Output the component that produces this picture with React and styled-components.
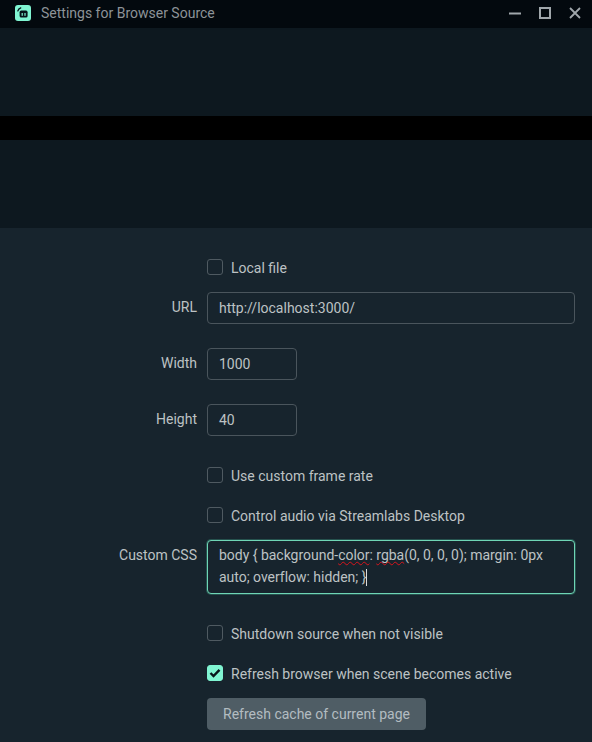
import React from 'react';
import styled, { createGlobalStyle } from 'styled-components';

const Global = createGlobalStyle`
  html, body { margin: 0; padding: 0; background: #17242d; }
  * { box-sizing: border-box; }
`;
const Page = styled.div`
  width: 592px; height: 742px; overflow: hidden;
  background: #17242d; font-family: Roboto, "Liberation Sans", sans-serif;
  font-size: 14px; color: #bdc2c4;
`;
const TitleBar = styled.div`
  height: 28px; background: #03090e; display: flex; align-items: center;
  padding: 0 0 2px 15px; color: #8d9398; font-size: 14px;
`;
const Logo = styled.svg`width: 16px; height: 16px; margin-right: 10px; flex: none;`;
const Title = styled.span`flex: 1; padding-bottom: 1px;`;
const WinBtn = styled.svg`width: 16px; height: 16px; margin-right: 14px; flex: none; &:last-child { margin-right: 9px; }`;
const Preview = styled.div`height: 200px; background: #0d181f; display: flex; flex-direction: column; justify-content: center;`;
const PreviewBand = styled.div`height: 24px; background: #000;`;
const Form = styled.div`padding: 31px 17px 0 0; display: flex; flex-direction: column;`;
const Row = styled.div`
  display: flex; align-items: flex-start; margin-top: ${p => p.$mt || 0}px;
`;
const Label = styled.label`
  width: 197px; text-align: right; margin-right: 10px; flex: none;
  line-height: 18px; padding-top: ${p => p.$pt ?? 6}px; color: #bdc2c4;
`;
const Input = styled.div`
  height: 32px; width: ${p => p.$w}; border: 1px solid #4a555c; border-radius: 4px;
  padding: 0 11px; line-height: 30px; color: #bdc2c4; background: #17242d;
`;
const TextArea = styled.div`
  width: 368px; height: 54px; border: 1px solid #6fd5b5; border-radius: 4px;
  box-shadow: 0 0 0 1px rgba(80, 200, 165, 0.28);
  background: #17242d; padding: 3px 11px; line-height: 22px; color: #bdc2c4; letter-spacing: -0.02px;
`;
const Squiggle = styled.span`text-decoration: underline wavy #d8141c 1px; text-underline-offset: 1px; text-decoration-skip-ink: none;`;
const Caret = styled.span`display: inline-block; width: 1px; height: 17px; background: #d8dcdd; vertical-align: -4px;`;
const CheckWrap = styled.div`display: flex; align-items: center; height: 16px; margin-left: 207px;`;
const CheckText = styled.span`padding-top: 2px; line-height: 16px;`;
const Box = styled.span`
  width: 16px; height: 16px; border-radius: 3px; flex: none; margin-right: 8px;
  border: 1px solid ${p => p.$on ? '#80f5d2' : '#4f5a61'};
  background: ${p => p.$on ? '#80f5d2' : 'transparent'};
  display: flex; align-items: center; justify-content: center;
`;
const Button = styled.button`
  margin-left: 207px; width: 219px; height: 32px; border: 0; border-radius: 4px;
  background: #4f5d65; color: #b3bcc1; font: 14px Roboto, "Liberation Sans", sans-serif; padding: 0;
`;

const Check = ({ on, children, mt }) => (
  <Row $mt={mt}>
    <CheckWrap>
      <Box $on={on}>
        {on && (
          <svg width="12" height="10" viewBox="0 0 12 10" fill="none">
            <path d="M1.5 5l3 3 6-6.2" stroke="#07141a" strokeWidth="2.4" />
          </svg>
        )}
      </Box>
      <CheckText>{children}</CheckText>
    </CheckWrap>
  </Row>
);

export default function App() {
  return (
    <Page>
      <Global />
      <TitleBar>
        <Logo viewBox="0 0 16 16">
          <rect width="16" height="16" rx="3" fill="#80f5d2" />
          <path d="M2.6 6.4Q3.4 3.4 6.2 2.6" stroke="#07141a" strokeWidth="1.3" fill="none" />
          <rect x="4.6" y="5.6" width="8" height="7" rx="1.6" fill="#07141a" />
          <rect x="6.6" y="8" width="1.2" height="2.8" fill="#80f5d2" />
          <rect x="9.4" y="8" width="1.2" height="2.8" fill="#80f5d2" />
        </Logo>
        <Title>Settings for Browser Source</Title>
        <WinBtn viewBox="0 0 16 16"><path d="M2 8.5h12" stroke="#a0a7ab" strokeWidth="2" /></WinBtn>
        <WinBtn viewBox="0 0 16 16"><rect x="3" y="3" width="10" height="10" fill="none" stroke="#a0a7ab" strokeWidth="2" /></WinBtn>
        <WinBtn viewBox="0 0 16 16"><path d="M3 3l10 10M13 3L3 13" stroke="#a0a7ab" strokeWidth="1.8" /></WinBtn>
      </TitleBar>
      <Preview><PreviewBand /></Preview>
      <Form>
        <Check>Local file</Check>
        <Row $mt={17}>
          <Label>URL</Label>
          <Input $w="368px">http://localhost:3000/</Input>
        </Row>
        <Row $mt={24}>
          <Label>Width</Label>
          <Input $w="90px">1000</Input>
        </Row>
        <Row $mt={24}>
          <Label>Height</Label>
          <Input $w="90px">40</Input>
        </Row>
        <Check mt={31}>Use custom frame rate</Check>
        <Check mt={24}>Control audio via Streamlabs Desktop</Check>
        <Row $mt={17}>
          <Label $pt={6}>Custom CSS</Label>
          <TextArea>
            body {'{'} background-<Squiggle>color</Squiggle>: <Squiggle>rgba</Squiggle>(0, 0, 0, 0); margin: 0px auto; overflow: hidden; {'}'}<Caret />
          </TextArea>
        </Row>
        <Check mt={31}>Shutdown source when not visible</Check>
        <Check on mt={24}>Refresh browser when scene becomes active</Check>
        <Row $mt={17}>
          <Button>Refresh cache of current page</Button>
        </Row>
      </Form>
    </Page>
  );
}
